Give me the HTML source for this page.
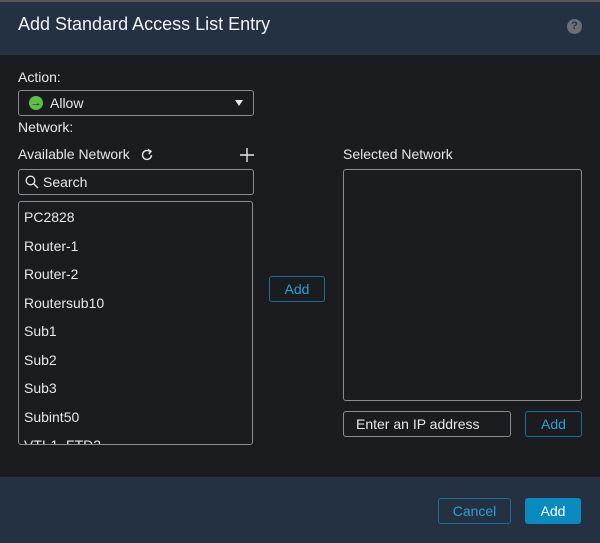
<!DOCTYPE html><html><head><style>
body{margin:0;width:600px;height:543px;background:#1a1c20;font-family:"Liberation Sans",sans-serif;color:#e6e8ea;position:relative;overflow:hidden}
.a{position:absolute}
.hdr{left:0;top:0;width:600px;height:53px;background:#243142;border-top:2px solid #555}
.ftr{left:0;top:477px;width:600px;height:66px;background:#243142}
.box{border:1px solid #8a8d91;border-radius:3px;background:#1a1c20;box-sizing:border-box}
.lbl{font-size:14px}
.btn{border:1px solid #1b6f93;border-radius:3px;color:#2aa0d4;font-size:14px;text-align:center;box-sizing:border-box}
</style></head><body>
<div class="a hdr"><div class="a" style="left:18px;top:12px;font-size:18px;color:#f0f2f4">Add Standard Access List Entry</div>
<div class="a" style="left:567px;top:17px;width:15px;height:15px;border-radius:50%;background:#6b7078;color:#2a3340;font-size:11px;font-weight:bold;text-align:center;line-height:15px">?</div></div>
<div class="a lbl" style="left:18px;top:69px">Action:</div>
<div class="a box" style="left:18px;top:90px;width:236px;height:26px"><div class="a" style="left:10px;top:5px;width:14px;height:14px;border-radius:50%;background:#5cbf47;color:#1a1c20;font-size:11px;line-height:14px;text-align:center;font-weight:bold">→</div><div class="a lbl" style="left:31px;top:4px">Allow</div><div class="a" style="right:10px;top:9px;width:0;height:0;border-left:4px solid transparent;border-right:4px solid transparent;border-top:6px solid #e6e8ea"></div></div>
<div class="a lbl" style="left:18px;top:119px">Network:</div>
<div class="a lbl" style="left:18px;top:146px">Available Network</div>
<svg class="a" style="left:140px;top:148px" width="14" height="14" viewBox="0 0 14 14"><path d="M11.5 7A4.5 4.5 0 1 1 9.8 3.4" fill="none" stroke="#e6e8ea" stroke-width="1.4"/><path d="M8 1.5L11 3.3 8.8 6" fill="none" stroke="#e6e8ea" stroke-width="1.4"/></svg>
<svg class="a" style="left:240px;top:148px" width="14" height="14"><path d="M7 0V14M0 7H14" stroke="#e6e8ea" stroke-width="1.4"/></svg>
<div class="a box" style="left:18px;top:169px;width:236px;height:26px"><svg class="a" style="left:6px;top:5px" width="14" height="14" viewBox="0 0 14 14"><circle cx="5.5" cy="5.5" r="4.3" fill="none" stroke="#e6e8ea" stroke-width="1.3"/><line x1="8.7" y1="8.7" x2="13" y2="13" stroke="#e6e8ea" stroke-width="1.4"/></svg><div class="a lbl" style="left:24px;top:4px">Search</div></div>
<div class="a box" style="left:18px;top:201px;width:235px;height:244px;overflow:hidden">
<div class="lbl" style="position:absolute;left:5px;top:1px;line-height:28.5px">PC2828<br>Router-1<br>Router-2<br>Routersub10<br>Sub1<br>Sub2<br>Sub3<br>Subint50<br>VTI-1_FTD2</div></div>
<div class="a btn" style="left:269px;top:276px;width:56px;height:26px;line-height:24px">Add</div>
<div class="a lbl" style="left:343px;top:146px">Selected Network</div>
<div class="a box" style="left:343px;top:169px;width:239px;height:232px"></div>
<div class="a box" style="left:343px;top:411px;width:168px;height:26px"><div class="a lbl" style="left:12px;top:4px">Enter an IP address</div></div>
<div class="a btn" style="left:525px;top:411px;width:57px;height:26px;line-height:24px">Add</div>
<div class="a ftr"><div class="a btn" style="left:438px;top:21px;width:73px;height:26px;line-height:24px">Cancel</div>
<div class="a btn" style="left:525px;top:21px;width:56px;height:26px;line-height:26px;background:#0a8bc0;border:none;color:#fff">Add</div></div>
</body></html>
